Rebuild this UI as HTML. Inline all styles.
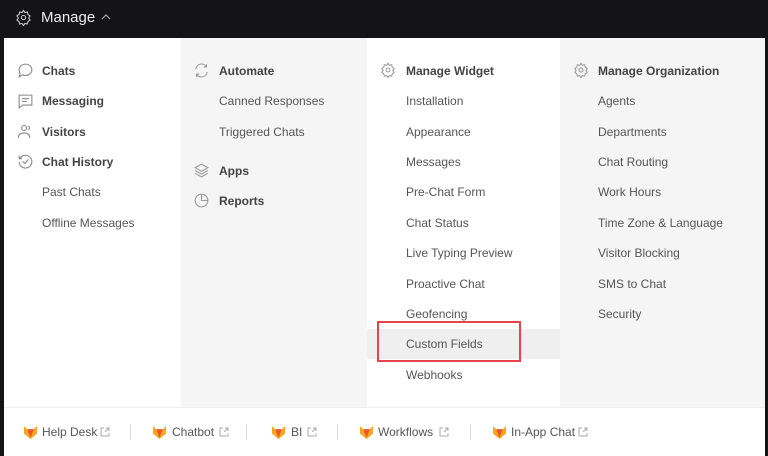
<!DOCTYPE html>
<html><head><style>
*{margin:0;padding:0;box-sizing:border-box}
body{width:768px;height:456px;background:#141414;font-family:"Liberation Sans",sans-serif;position:relative;overflow:hidden}
.hdr{position:absolute;left:0;top:0;width:768px;height:38px;background:#141416}
.hdr .t{position:absolute;left:41px;top:9px;color:#eee;font-size:15px}
.panel{position:absolute;left:4px;top:38px;width:761px;height:418px;background:#fff}
.col{position:absolute;top:0;height:369px}
.t1{position:absolute;font-size:12px;color:#555;white-space:nowrap}
.b{font-weight:bold;color:#444}
.sep{position:absolute;top:424px;width:1px;height:16px;background:#ddd}
svg.i{position:absolute}
</style></head><body>
<div class="hdr">
<svg class="i" style="left:15px;top:9px" width="17" height="17" viewBox="0 0 24 24" fill="none" stroke="#ccc" stroke-width="1.5"><circle cx="12" cy="12" r="3"/><path d="M12 2l2 3 3.5-.8.8 3.5 3 2-2 3 2 3-3 2-.8 3.5-3.5-.8-2 3-2-3-3.5.8-.8-3.5-3-2 2-3-2-3 3-2 .8-3.5 3.5.8z"/></svg>
<div class="t">Manage</div>
<svg class="i" style="left:101px;top:13px" width="10" height="7" viewBox="0 0 10 7" fill="none" stroke="#aaa" stroke-width="1.2"><path d="M1 6l4-4 4 4"/></svg>
</div>
<div class="panel"></div>
<div class="col" style="left:181px;top:38px;width:186px;background:#f5f5f5"></div>
<div class="col" style="left:560px;top:38px;width:205px;background:#f5f5f5"></div>
<div style="position:absolute;left:367px;top:329px;width:193px;height:30px;background:#efefef"></div>
<div style="position:absolute;left:377px;top:321px;width:144px;height:41px;border:2px solid #e8434a"></div>

<svg class="i" style="left:17px;top:62px" width="17" height="17" viewBox="0 0 24 24" fill="none" stroke="#888" stroke-width="1.5"><path d="M12 3c5 0 9 3.5 9 8s-4 8-9 8c-1.5 0-3-.3-4-.8L3 21l1.5-4C3.5 15.5 3 13.3 3 11c0-4.5 4-8 9-8z"/></svg>
<svg class="i" style="left:17px;top:93px" width="17" height="17" viewBox="0 0 24 24" fill="none" stroke="#888" stroke-width="1.5"><path d="M3 3h18v14H8l-5 4z"/><path d="M7 8h10M7 12h7"/></svg>
<svg class="i" style="left:17px;top:123px" width="17" height="17" viewBox="0 0 24 24" fill="none" stroke="#888" stroke-width="1.5"><circle cx="10" cy="7" r="3.5"/><path d="M2 21c0-5 3.5-7 8-7s8 2 8 7M16 4c2 1 2 5 0 6"/></svg>
<svg class="i" style="left:17px;top:153px" width="17" height="17" viewBox="0 0 24 24" fill="none" stroke="#888" stroke-width="1.5"><path d="M4 8a9 9 0 1 1-1 5M3 4v4h4"/><path d="M8 12l3 3 5-6"/></svg>
<div class="t1 b" style="left:42px;top:64px">Chats</div>
<div class="t1 b" style="left:42px;top:94px">Messaging</div>
<div class="t1 b" style="left:42px;top:125px">Visitors</div>
<div class="t1 b" style="left:42px;top:155px">Chat History</div>
<div class="t1" style="left:42px;top:185px">Past Chats</div>
<div class="t1" style="left:42px;top:216px">Offline Messages</div>

<svg class="i" style="left:193px;top:62px" width="17" height="17" viewBox="0 0 24 24" fill="none" stroke="#999" stroke-width="1.5"><path d="M4 10a8 8 0 0 1 15-3M20 14a8 8 0 0 1-15 3M19 3v4h-4M5 21v-4h4"/></svg>
<svg class="i" style="left:193px;top:162px" width="17" height="17" viewBox="0 0 24 24" fill="none" stroke="#999" stroke-width="1.5"><path d="M12 3l9 5-9 5-9-5zM3 12l9 5 9-5M3 16l9 5 9-5"/></svg>
<svg class="i" style="left:193px;top:192px" width="17" height="17" viewBox="0 0 24 24" fill="none" stroke="#999" stroke-width="1.5"><circle cx="12" cy="12" r="9"/><path d="M12 3v9h9"/></svg>
<div class="t1 b" style="left:219px;top:64px">Automate</div>
<div class="t1" style="left:219px;top:94px">Canned Responses</div>
<div class="t1" style="left:219px;top:125px">Triggered Chats</div>
<div class="t1 b" style="left:219px;top:164px">Apps</div>
<div class="t1 b" style="left:219px;top:194px">Reports</div>

<svg class="i" style="left:380px;top:62px" width="16" height="16" viewBox="0 0 24 24" fill="none" stroke="#999" stroke-width="1.6"><circle cx="12" cy="12" r="3"/><path d="M12 2l2 3 3.5-.8.8 3.5 3 2-2 3 2 3-3 2-.8 3.5-3.5-.8-2 3-2-3-3.5.8-.8-3.5-3-2 2-3-2-3 3-2 .8-3.5 3.5.8z"/></svg>
<div class="t1 b" style="left:406px;top:64px">Manage Widget</div>
<div class="t1" style="left:406px;top:94px">Installation</div>
<div class="t1" style="left:406px;top:125px">Appearance</div>
<div class="t1" style="left:406px;top:155px">Messages</div>
<div class="t1" style="left:406px;top:185px">Pre-Chat Form</div>
<div class="t1" style="left:406px;top:216px">Chat Status</div>
<div class="t1" style="left:406px;top:246px">Live Typing Preview</div>
<div class="t1" style="left:406px;top:277px">Proactive Chat</div>
<div class="t1" style="left:406px;top:307px">Geofencing</div>
<div class="t1" style="left:406px;top:337px">Custom Fields</div>
<div class="t1" style="left:406px;top:368px">Webhooks</div>

<svg class="i" style="left:573px;top:62px" width="16" height="16" viewBox="0 0 24 24" fill="none" stroke="#999" stroke-width="1.6"><circle cx="12" cy="12" r="3"/><path d="M12 2l2 3 3.5-.8.8 3.5 3 2-2 3 2 3-3 2-.8 3.5-3.5-.8-2 3-2-3-3.5.8-.8-3.5-3-2 2-3-2-3 3-2 .8-3.5 3.5.8z"/></svg>
<div class="t1 b" style="left:598px;top:64px">Manage Organization</div>
<div class="t1" style="left:598px;top:94px">Agents</div>
<div class="t1" style="left:598px;top:125px">Departments</div>
<div class="t1" style="left:598px;top:155px">Chat Routing</div>
<div class="t1" style="left:598px;top:185px">Work Hours</div>
<div class="t1" style="left:598px;top:216px">Time Zone &amp; Language</div>
<div class="t1" style="left:598px;top:246px">Visitor Blocking</div>
<div class="t1" style="left:598px;top:277px">SMS to Chat</div>
<div class="t1" style="left:598px;top:307px">Security</div>

<div style="position:absolute;left:4px;top:407px;width:761px;height:1px;background:#eee"></div>
<div style="position:absolute;left:4px;top:408px;width:761px;height:48px;background:#fff"></div>

<svg class="i" style="left:24px;top:426px" width="13" height="13" viewBox="0 0 12 12"><path d="M0 0l3 3h6l3-3v7l-6 5-6-5z" fill="#f5a623"/><path d="M3 3h6l-3 8z" fill="#e8562a"/></svg>
<div class="t1" style="left:42px;top:425px">Help Desk</div>
<svg class="i" style="left:100px;top:427px" width="10" height="10" viewBox="0 0 10 10" fill="none" stroke="#aaa"><path d="M4 1H1v8h8V6M6 1h3v3M9 1L5 5"/></svg>
<div class="sep" style="left:130px"></div>
<svg class="i" style="left:153px;top:426px" width="13" height="13" viewBox="0 0 12 12"><path d="M0 0l3 3h6l3-3v7l-6 5-6-5z" fill="#f5a623"/><path d="M3 3h6l-3 8z" fill="#e8562a"/></svg>
<div class="t1" style="left:172px;top:425px">Chatbot</div>
<svg class="i" style="left:219px;top:427px" width="10" height="10" viewBox="0 0 10 10" fill="none" stroke="#aaa"><path d="M4 1H1v8h8V6M6 1h3v3M9 1L5 5"/></svg>
<div class="sep" style="left:246px"></div>
<svg class="i" style="left:272px;top:426px" width="13" height="13" viewBox="0 0 12 12"><path d="M0 0l3 3h6l3-3v7l-6 5-6-5z" fill="#f5a623"/><path d="M3 3h6l-3 8z" fill="#e8562a"/></svg>
<div class="t1" style="left:291px;top:425px">BI</div>
<svg class="i" style="left:307px;top:427px" width="10" height="10" viewBox="0 0 10 10" fill="none" stroke="#aaa"><path d="M4 1H1v8h8V6M6 1h3v3M9 1L5 5"/></svg>
<div class="sep" style="left:337px"></div>
<svg class="i" style="left:360px;top:426px" width="13" height="13" viewBox="0 0 12 12"><path d="M0 0l3 3h6l3-3v7l-6 5-6-5z" fill="#f5a623"/><path d="M3 3h6l-3 8z" fill="#e8562a"/></svg>
<div class="t1" style="left:378px;top:425px">Workflows</div>
<svg class="i" style="left:439px;top:427px" width="10" height="10" viewBox="0 0 10 10" fill="none" stroke="#aaa"><path d="M4 1H1v8h8V6M6 1h3v3M9 1L5 5"/></svg>
<div class="sep" style="left:470px"></div>
<svg class="i" style="left:493px;top:426px" width="13" height="13" viewBox="0 0 12 12"><path d="M0 0l3 3h6l3-3v7l-6 5-6-5z" fill="#f5a623"/><path d="M3 3h6l-3 8z" fill="#e8562a"/></svg>
<div class="t1" style="left:511px;top:425px">In-App Chat</div>
<svg class="i" style="left:578px;top:427px" width="10" height="10" viewBox="0 0 10 10" fill="none" stroke="#aaa"><path d="M4 1H1v8h8V6M6 1h3v3M9 1L5 5"/></svg>
</body></html>
